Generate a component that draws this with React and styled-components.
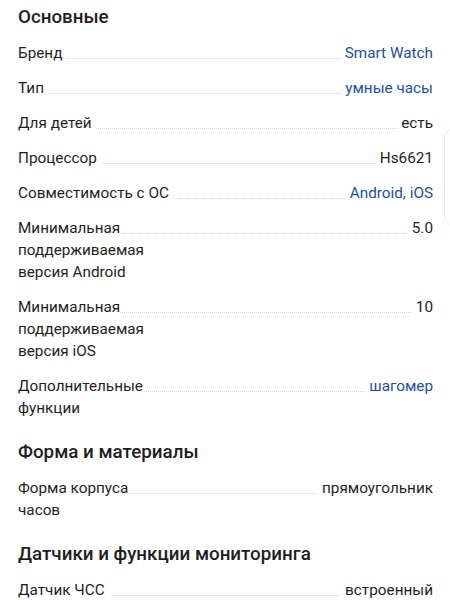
import styled, { createGlobalStyle } from "styled-components";

const GlobalStyle = createGlobalStyle`
	html, body {
		margin: 0;
		padding: 0;
		background: #fff;
		overflow: hidden;
	}
	body {
		font-family: Roboto, "Liberation Sans", sans-serif;
		color: #21201f;
	}
`;

const sections = [
	{
		title: "Основные",
		rows: [
			{ label: "Бренд", value: "Smart Watch", link: true },
			{ label: "Тип", value: "умные часы", link: true },
			{ label: "Для детей", value: "есть" },
			{ label: "Процессор", value: "Hs6621" },
			{ label: "Совместимость с ОС", value: "Android, iOS", link: true },
			{ label: "Минимальная поддерживаемая версия Android", value: "5.0" },
			{ label: "Минимальная поддерживаемая версия iOS", value: "10" },
			{ label: "Дополнительные функции", value: "шагомер", link: true },
		],
	},
	{
		title: "Форма и материалы",
		rows: [{ label: "Форма корпуса часов", value: "прямоугольник" }],
	},
	{
		title: "Датчики и функции мониторинга",
		rows: [{ label: "Датчик ЧСС", value: "встроенный" }],
	},
];

const App = () => {
	return (
		<>
			<GlobalStyle />
			<Page>
				{sections.map((section) => (
					<Section key={section.title}>
						<Heading>{section.title}</Heading>
						<List>
							{section.rows.map((row) => (
								<Row key={row.label}>
									<LabelCell>
										<Label>{row.label}</Label>
									</LabelCell>
									<Value $link={row.link}>{row.value}</Value>
								</Row>
							))}
						</List>
					</Section>
				))}
			</Page>
			<SideCard />
		</>
	);
};

export default App;

const Page = styled.div`
	padding: 5px 17px 0 18px;
	display: flex;
	flex-direction: column;
	gap: 21px;
`;

const Section = styled.section`
	display: flex;
	flex-direction: column;
	gap: 13px;
`;

const Heading = styled.h2`
	margin: 0;
	font-size: 18.8px;
	line-height: 24px;
	font-weight: 500;
	color: #1f1e1d;
`;

const List = styled.div`
	display: flex;
	flex-direction: column;
	gap: 13px;
`;

const Row = styled.div`
	display: flex;
	justify-content: space-between;
	align-items: flex-start;
	font-size: 15.3px;
	line-height: 22px;
	color: #1f1e1d;
	background-image: linear-gradient(to right, #d4d4d4 50%, transparent 50%);
	background-size: 2px 1px;
	background-repeat: repeat-x;
	background-position: 0 16px;
`;

const LabelCell = styled.div`
	max-width: 157px;
`;

const Label = styled.span`
	background: #fff;
	padding-right: 4px;
`;

const Value = styled.span`
	background: #fff;
	padding-left: 4px;
	white-space: nowrap;
	color: ${(p) => (p.$link ? "#1c4fa6" : "#1f1e1d")};
`;

const SideCard = styled.div`
	position: fixed;
	left: 444px;
	top: 128px;
	width: 30px;
	height: 96px;
	border: 1px solid #ececec;
	border-radius: 10px;
	background: #fff;
`;
